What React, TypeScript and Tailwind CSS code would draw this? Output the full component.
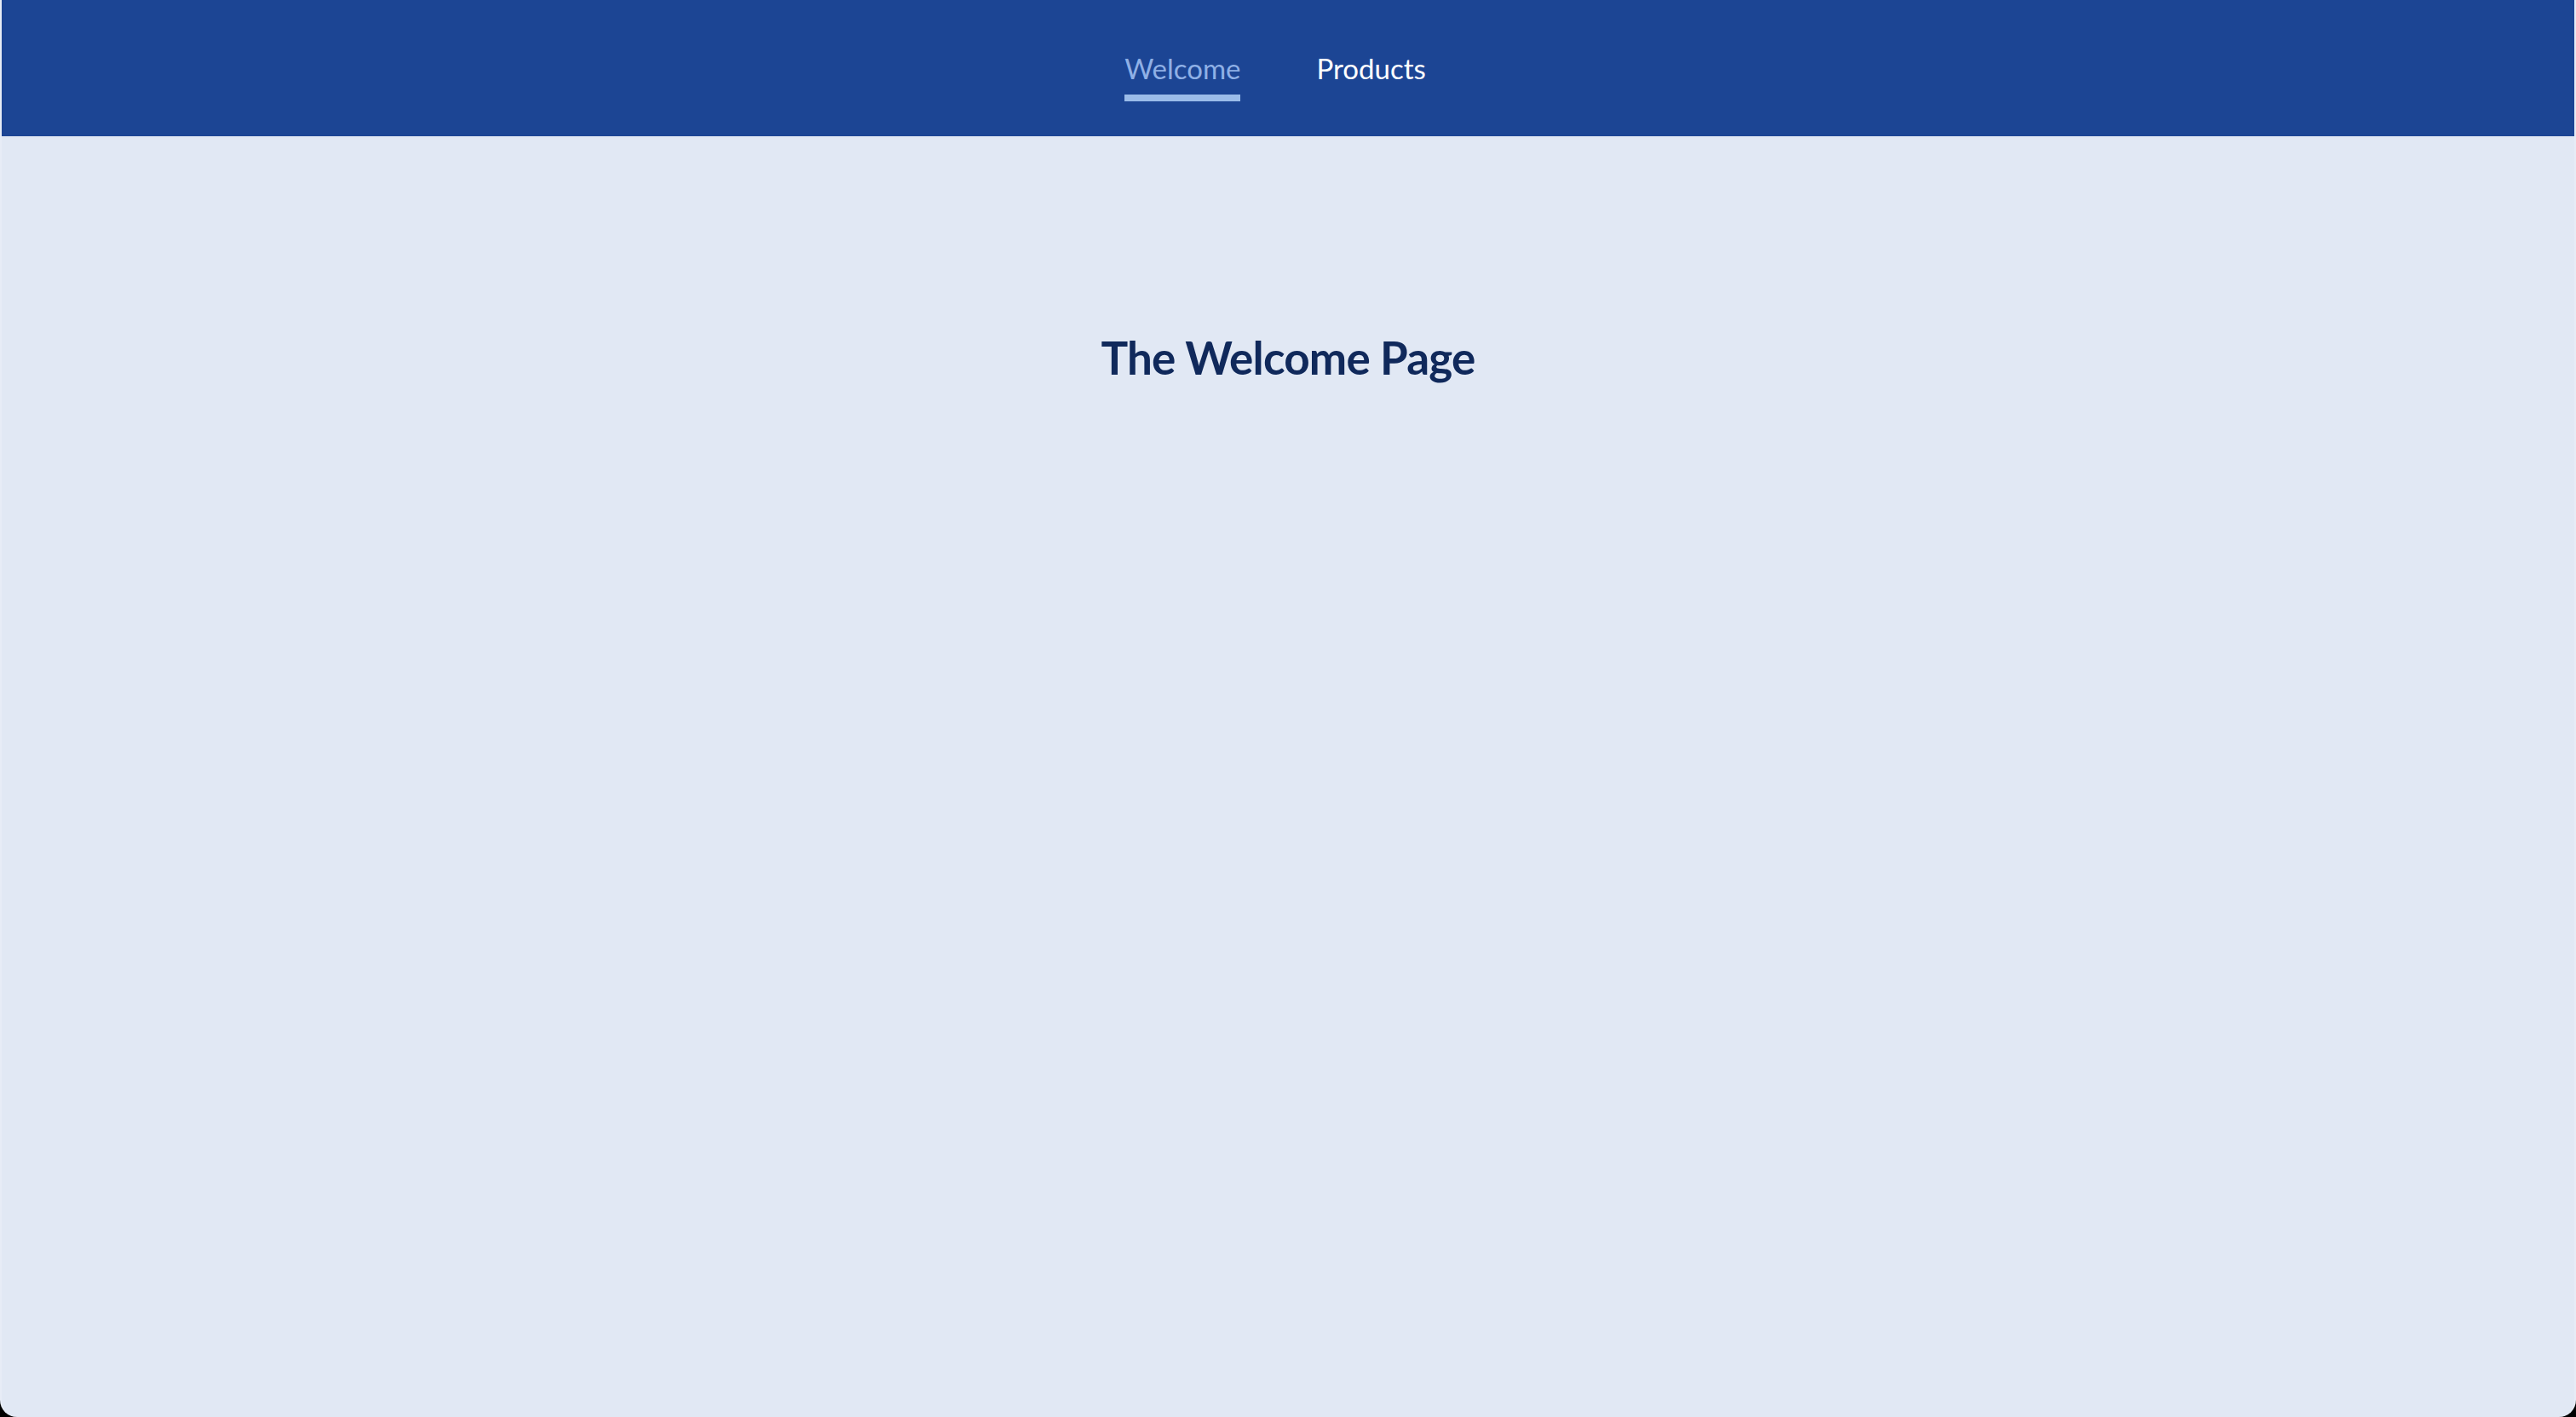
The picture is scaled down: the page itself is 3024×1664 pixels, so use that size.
import React from "react";

export default function App() {
  return (
    <div className="min-h-screen w-full bg-black" style={{ fontFamily: "Lato, 'Noto Sans', sans-serif" }}>
      <div className="flex h-[1664px] w-full flex-col overflow-hidden rounded-b-[20px] border-x-2 border-white/20 bg-[#e1e8f4]">
        <header className="h-[160px] w-full shrink-0 bg-[#1c4594]">
          <nav className="flex justify-center gap-[89px] pr-[30px] pt-[61px]">
            <a className="flex flex-col items-stretch text-[33px] leading-[1.2] text-[#8fb0e6]">
              <span>Welcome</span>
              <span className="mt-[10px] h-[8px] w-full bg-[#9bbce9]" />
            </a>
            <a className="flex flex-col text-[33px] leading-[1.2] text-white">
              <span>Products</span>
            </a>
          </nav>
        </header>
        <main className="flex flex-1 justify-center pt-[228px]">
          <h1 className="text-[53px] font-bold leading-[1.2] tracking-[-0.015em] text-[#10295b]">The Welcome Page</h1>
        </main>
      </div>
    </div>
  );
}
